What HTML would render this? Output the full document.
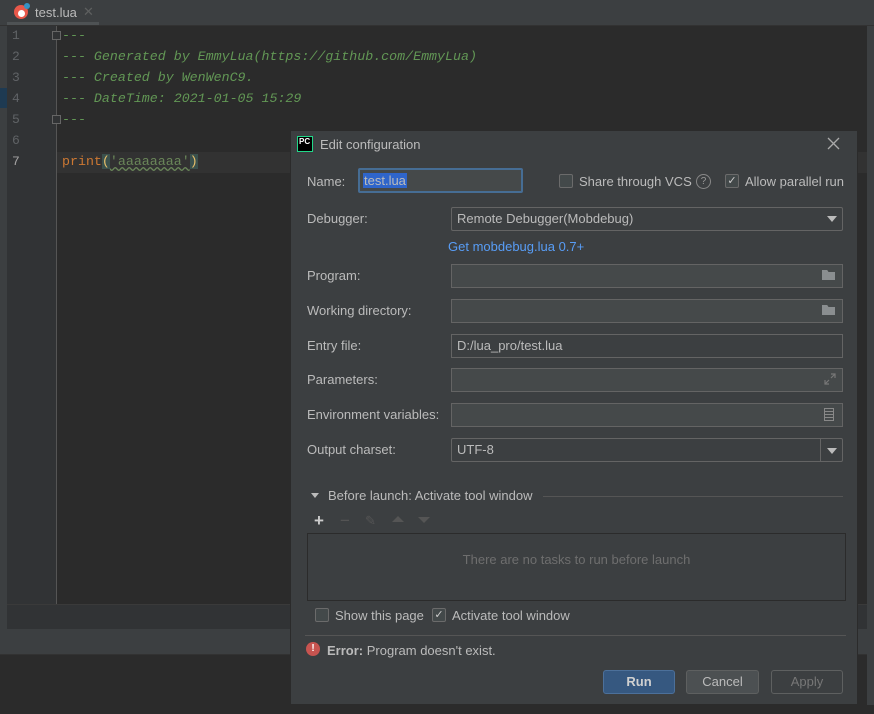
<!DOCTYPE html>
<html><head><meta charset="utf-8"><style>
*{margin:0;padding:0;box-sizing:border-box}
body{width:874px;height:714px;background:#2b2b2b;position:relative;overflow:hidden;font-family:"Liberation Sans",sans-serif;font-size:13px;color:#bbbbbb}
.a{position:absolute}
.code{font-family:"Liberation Mono",monospace;font-size:13.3px;font-style:italic;color:#629755;white-space:pre}
.ln{font-family:"Liberation Mono",monospace;font-size:13px;color:#606366;left:12px}
.lbl{left:307px;color:#bbbbbb}
.inp{left:451px;width:392px;height:24px;border:1px solid #646464;background:#45494a}
.inp.w{background:#3c3f41}
.cb{width:14px;height:14px;border:1px solid #6b6b6b;background:#43494a;border-radius:2px}
.btn{height:24px;border:1px solid #5e6060;background:#4c5052;border-radius:3px;text-align:center;line-height:22px}
.tri{width:0;height:0;border-left:5px solid transparent;border-right:5px solid transparent;border-top:6px solid #bbb}
</style></head><body>
<div class="a" style="left:0;top:0;width:874px;height:26px;background:#3c3f41;border-bottom:1px solid #323232"></div>
<div class="a" style="left:7px;top:0;width:92px;height:25px;background:#4e5254"></div>
<div class="a" style="left:7px;top:0;width:92px;height:22px;background:#3c3f41"></div>
<div class="a" style="left:14px;top:5px;width:14px;height:14px;border-radius:50%;background:#e8584a"></div>
<div class="a" style="left:18px;top:10px;width:7px;height:7px;border-radius:50%;background:#fff"></div>
<div class="a" style="left:24px;top:3px;width:6px;height:6px;border-radius:50%;background:#3592c4"></div>
<div class="a" style="left:35px;top:5px;color:#bbbbbb">test.lua</div>
<div class="a" style="left:83px;top:4px;color:#5e6060;font-size:13px">✕</div>
<div class="a" style="left:0;top:26px;width:7px;height:603px;background:#3c3f41"></div>
<div class="a" style="left:7px;top:26px;width:50px;height:578px;background:#313335"></div>
<div class="a" style="left:0;top:88px;width:7px;height:20px;background:#1e3a52"></div>
<div class="a" style="left:56px;top:26px;width:1px;height:578px;background:#555"></div>
<div class="a" style="left:57px;top:152px;width:810px;height:21px;background:#323232"></div>
<div class="a ln" style="top:28px">1</div>
<div class="a ln" style="top:49px">2</div>
<div class="a ln" style="top:70px">3</div>
<div class="a ln" style="top:91px">4</div>
<div class="a ln" style="top:112px">5</div>
<div class="a ln" style="top:133px">6</div>
<div class="a ln" style="top:154px;color:#a4a3a3">7</div>
<div class="a" style="left:52px;top:31px;width:9px;height:9px;border:1px solid #666;background:#313335"></div>
<div class="a" style="left:52px;top:115px;width:9px;height:9px;border:1px solid #666;background:#313335"></div>
<div class="a code" style="left:62px;top:28px">---</div>
<div class="a code" style="left:62px;top:49px">--- Generated by EmmyLua(https://github.com/EmmyLua)</div>
<div class="a code" style="left:62px;top:70px">--- Created by WenWenC9.</div>
<div class="a code" style="left:62px;top:91px">--- DateTime: 2021-01-05 15:29</div>
<div class="a code" style="left:62px;top:112px">---</div>
<div class="a code" style="left:62px;top:154px;font-style:normal;color:#cc7832">print<span style="background:#3b514d;color:#e8bf6a">(</span><span style="color:#6a8759;text-decoration:underline wavy #6a8759">'aaaaaaaa'</span><span style="background:#3b514d;color:#e8bf6a">)</span></div>
<div class="a" style="left:7px;top:604px;width:860px;height:25px;background:#313335;border-top:1px solid #3a3a3a"></div>
<div class="a" style="left:0;top:629px;width:867px;height:26px;background:#3c3f41;border-bottom:1px solid #323232"></div>
<div class="a" style="left:867px;top:26px;width:7px;height:679px;background:#3c3f41"></div>
<!-- dialog -->
<div class="a" style="left:290px;top:130px;width:568px;height:575px;background:#3c3f41;border:1px solid #2b2b2b"></div>
<div class="a" style="left:297px;top:136px;width:16px;height:16px;border:1px solid #21d789;background:#000;color:#fff;font-size:8px;font-weight:bold;line-height:10px;padding-left:1px">PC</div>
<div class="a" style="left:320px;top:137px">Edit configuration</div>
<svg class="a" style="left:827px;top:137px" width="13" height="13"><path d="M1 1L12 12M12 1L1 12" stroke="#aaa" stroke-width="1.3"/></svg>

<div class="a lbl" style="top:174px">Name:</div>
<div class="a" style="left:358px;top:168px;width:165px;height:25px;border:2px solid #466d94;border-radius:2px;background:#45494a"></div>
<div class="a" style="left:363px;top:173px;background:#2f65ca;color:#bbbbbb;padding:0 1px">test.lua</div>
<div class="a cb" style="left:559px;top:174px"></div>
<div class="a" style="left:579px;top:174px">Share through VCS</div>
<div class="a" style="left:696px;top:174px;width:15px;height:15px;border:1px solid #888;border-radius:50%;font-size:10px;text-align:center;line-height:13px;color:#999">?</div>
<div class="a cb" style="left:725px;top:174px;color:#ccc;font-size:11px;line-height:12px;text-align:center">✓</div>
<div class="a" style="left:745px;top:174px">Allow parallel run</div>

<div class="a lbl" style="top:211px">Debugger:</div>
<div class="a inp w" style="top:207px;height:24px;border-radius:2px"></div>
<div class="a" style="left:457px;top:211px">Remote Debugger(Mobdebug)</div>
<div class="a tri" style="left:827px;top:216px"></div>
<div class="a" style="left:448px;top:239px;color:#589df6">Get mobdebug.lua 0.7+</div>

<div class="a lbl" style="top:268px">Program:</div>
<div class="a inp" style="top:264px"></div>
<div class="a" style="left:822px;top:270px;width:13px;height:10px;background:#8a8e90;clip-path:polygon(0 0,40% 0,50% 20%,100% 20%,100% 100%,0 100%)"></div>
<div class="a lbl" style="top:303px">Working directory:</div>
<div class="a inp" style="top:299px"></div>
<div class="a" style="left:822px;top:305px;width:13px;height:10px;background:#8a8e90;clip-path:polygon(0 0,40% 0,50% 20%,100% 20%,100% 100%,0 100%)"></div>
<div class="a lbl" style="top:338px">Entry file:</div>
<div class="a inp w" style="top:334px"></div>
<div class="a" style="left:457px;top:338px">D:/lua_pro/test.lua</div>
<div class="a lbl" style="top:372px">Parameters:</div>
<div class="a inp" style="top:368px"></div>
<svg class="a" style="left:824px;top:373px" width="12" height="12"><path d="M7 1H11V5M1 7V11H5" stroke="#777" fill="none" stroke-width="1.2"/><path d="M11 1L7 5M1 11L5 7" stroke="#777" stroke-width="1.2"/></svg>
<div class="a lbl" style="top:407px">Environment variables:</div>
<div class="a inp" style="top:403px"></div>
<div class="a" style="left:824px;top:408px;width:10px;height:13px;border:1px solid #888;background:repeating-linear-gradient(#45494a 0 2px,#888 2px 3px)"></div>
<div class="a lbl" style="top:442px">Output charset:</div>
<div class="a inp w" style="top:438px;border-radius:2px"></div>
<div class="a" style="left:820px;top:438px;width:1px;height:24px;background:#646464"></div>
<div class="a" style="left:457px;top:442px">UTF-8</div>
<div class="a tri" style="left:827px;top:448px"></div>

<div class="a tri" style="left:311px;top:493px;border-left-width:4px;border-right-width:4px;border-top-width:5px"></div>
<div class="a" style="left:328px;top:488px">Before launch: Activate tool window</div>
<div class="a" style="left:543px;top:496px;width:300px;height:1px;background:#555"></div>
<div class="a" style="left:314px;top:511px;font-size:17px;color:#ccc;font-weight:bold">+</div>
<div class="a" style="left:340px;top:511px;font-size:17px;color:#555">−</div>
<div class="a" style="left:365px;top:513px;font-size:13px;color:#555">✎</div>
<div class="a" style="left:392px;top:516px;width:0;height:0;border-left:6px solid transparent;border-right:6px solid transparent;border-bottom:6px solid #555"></div>
<div class="a" style="left:418px;top:517px;width:0;height:0;border-left:6px solid transparent;border-right:6px solid transparent;border-top:6px solid #555"></div>
<div class="a" style="left:307px;top:533px;width:539px;height:68px;border:1px solid #2b2b2b;background:#3c3f41"></div>
<div class="a" style="left:307px;top:552px;width:539px;text-align:center;color:#6e6e6e">There are no tasks to run before launch</div>
<div class="a cb" style="left:315px;top:608px"></div>
<div class="a" style="left:335px;top:608px">Show this page</div>
<div class="a cb" style="left:432px;top:608px;color:#ccc;font-size:11px;line-height:12px;text-align:center">✓</div>
<div class="a" style="left:452px;top:608px">Activate tool window</div>
<div class="a" style="left:305px;top:635px;width:541px;height:1px;background:#555"></div>
<div class="a" style="left:306px;top:642px;width:14px;height:14px;border-radius:50%;background:#c75450;color:#fff;font-size:10px;font-weight:bold;text-align:center;line-height:14px">!</div>
<div class="a" style="left:327px;top:643px"><b>Error:</b> Program doesn't exist.</div>
<div class="a btn" style="left:603px;top:670px;width:72px;background:#365880;border-color:#4c709a;font-weight:bold;color:#d0d0d0">Run</div>
<div class="a btn" style="left:686px;top:670px;width:73px">Cancel</div>
<div class="a btn" style="left:771px;top:670px;width:72px;background:#3c3f41;color:#777">Apply</div>
</body></html>
